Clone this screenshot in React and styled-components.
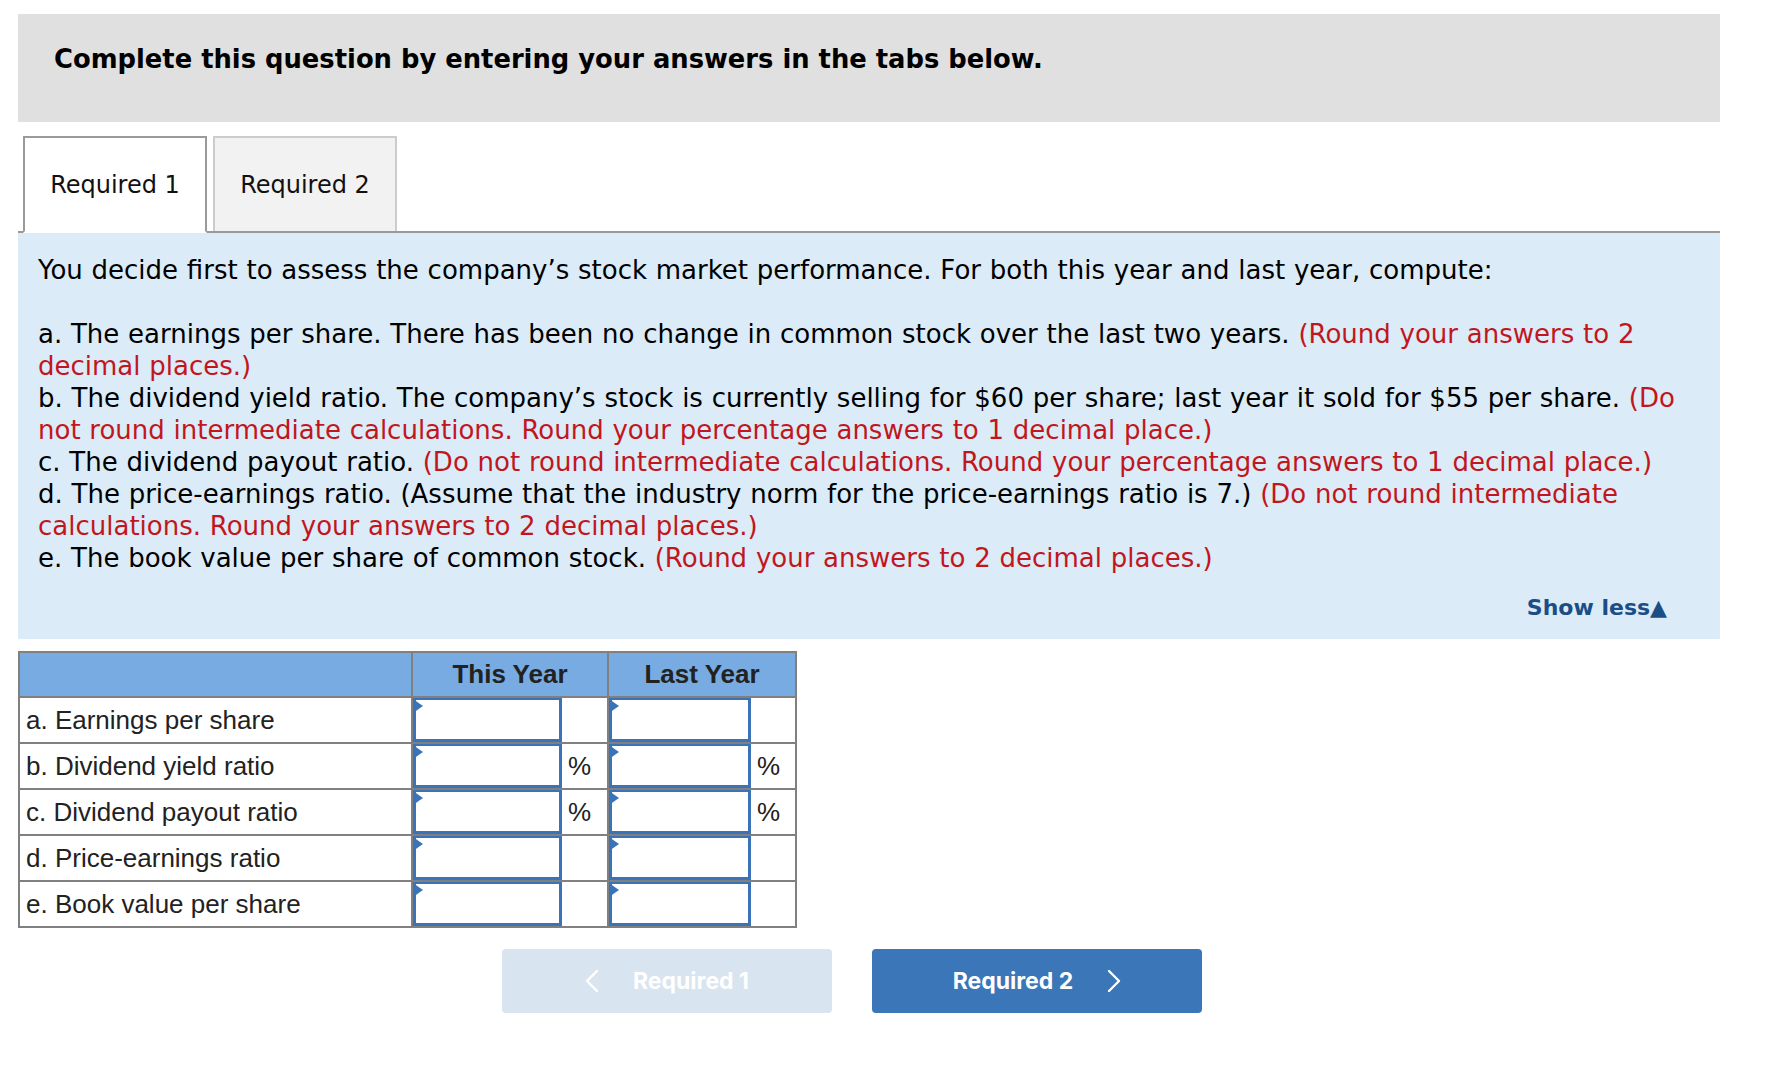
import React from 'react'
import styled, { createGlobalStyle } from 'styled-components'

const GlobalStyle = createGlobalStyle`
  body {
    margin: 0;
    background: #ffffff;
  }
`

const Page = styled.div`
  padding: 14px 46px 40px 18px;
  font-family: "DejaVu Sans", Verdana, sans-serif;
  color: #000;
`

const InstructionBar = styled.div`
  background-color: #e0e0e0;
  height: 108px;
  box-sizing: border-box;
  padding: 31px 27px 0 36px;
  font-size: 25.8px;
  line-height: 28px;
  font-weight: bold;
`

const TabList = styled.div`
  display: flex;
  gap: 6px;
  margin-top: 14px;
  padding-left: 5px;
  border-bottom: 2px solid #999;
`

const Tab = styled.div`
  width: 184px;
  box-sizing: border-box;
  display: flex;
  align-items: center;
  justify-content: center;
  font-size: 24px;
  color: #111;
  border: 2px solid ${props => (props.active ? '#9a9a9a' : '#cccccc')};
  background-color: ${props => (props.active ? '#ffffff' : '#f2f2f2')};
  margin-bottom: ${props => (props.active ? '-2px' : '0')};
  border-bottom: ${props => (props.active ? '2px solid #ffffff' : 'none')};
  height: ${props => (props.active ? '97px' : '95px')};
`

const Panel = styled.div`
  background-color: #dbebf7;
  padding: 21px 28px 15px 20px;
  font-size: 26px;
  line-height: 32px;
  word-spacing: 0.5px;
`

const Intro = styled.p`
  margin: 0 0 32px;
  white-space: nowrap;
`

const Item = styled.div`
  white-space: nowrap;
`

const Note = styled.span`
  color: #c2161d;
`

const ShowLess = styled.div`
  text-align: right;
  margin-top: 18px;
  margin-right: 25px;
  font-size: 22px;
  font-weight: bold;
  word-spacing: 0;
  color: #1b4d86;
`

const Table = styled.table`
  margin-top: 12px;
  border-collapse: collapse;
  table-layout: fixed;
  width: 777px;
  font-family: "Liberation Sans", Arial, sans-serif;
  color: #222;
`

const HeadCell = styled.th`
  background-color: #78abe1;
  border: 2px solid #808080;
  height: 43px;
  font-size: 26px;
  font-weight: bold;
  text-align: center;
  padding: 0;
`

const LabelCell = styled.td`
  border: 2px solid #808080;
  height: 44px;
  font-size: 26px;
  padding: 0 0 0 6px;
`

const InputCell = styled.td`
  border: 2px solid #808080;
  border-right: none;
  padding: 0;
  height: 44px;
`

const UnitCell = styled.td`
  border: 2px solid #808080;
  border-left: none;
  padding: 0 0 0 6px;
  font-size: 26px;
`

const InputBox = styled.div`
  position: relative;
  height: 44px;
  box-sizing: border-box;
  border: 3px solid #3b73b9;
  border-top-width: 2px;
  background: #fff;

  &::before {
    content: '';
    position: absolute;
    left: -3px;
    top: -1px;
    border-top: 7px solid transparent;
    border-bottom: 7px solid transparent;
    border-left: 10px solid #3b73b9;
  }
`

const NavRow = styled.div`
  display: flex;
  gap: 40px;
  margin-top: 21px;
  padding-left: 484px;
`

const NavButton = styled.button`
  width: 330px;
  height: 64px;
  border: none;
  border-radius: 4px;
  display: flex;
  align-items: center;
  justify-content: center;
  gap: 34px;
  font-family: Inter, Roboto, sans-serif;
  font-size: 23px;
  font-weight: 700;
  color: #fff;
  background-color: ${props => (props.disabled ? '#d9e4f1' : '#3a76b8')};
  padding: 0;
`

const Chevron = ({ dir }) => (
  <svg width='14' height='24' viewBox='0 0 14 24' fill='none'>
    <polyline
      points={dir === 'left' ? '12,2 2,12 12,22' : '2,2 12,12 2,22'}
      stroke='#ffffff'
      strokeWidth='2.4'
      strokeLinecap='round'
      strokeLinejoin='round'
    />
  </svg>
)

const rows = [
  { label: 'a. Earnings per share', unit: '' },
  { label: 'b. Dividend yield ratio', unit: '%' },
  { label: 'c. Dividend payout ratio', unit: '%' },
  { label: 'd. Price-earnings ratio', unit: '' },
  { label: 'e. Book value per share', unit: '' }
]

export default function App () {
  return (
    <Page>
      <GlobalStyle />
      <InstructionBar>Complete this question by entering your answers in the tabs below.</InstructionBar>

      <TabList>
        <Tab active>Required 1</Tab>
        <Tab>Required 2</Tab>
      </TabList>

      <Panel>
        <Intro>You decide first to assess the company’s stock market performance. For both this year and last year, compute:</Intro>
        <Item>
          a. The earnings per share. There has been no change in common stock over the last two years. <Note>(Round your answers to 2<br />decimal places.)</Note>
        </Item>
        <Item>
          b. The dividend yield ratio. The company’s stock is currently selling for $60 per share; last year it sold for $55 per share. <Note>(Do<br />not round intermediate calculations. Round your percentage answers to 1 decimal place.)</Note>
        </Item>
        <Item>
          c. The dividend payout ratio. <Note>(Do not round intermediate calculations. Round your percentage answers to 1 decimal place.)</Note>
        </Item>
        <Item>
          d. The price-earnings ratio. (Assume that the industry norm for the price-earnings ratio is 7.) <Note>(Do not round intermediate<br />calculations. Round your answers to 2 decimal places.)</Note>
        </Item>
        <Item>
          e. The book value per share of common stock. <Note>(Round your answers to 2 decimal places.)</Note>
        </Item>
        <ShowLess>Show less▲</ShowLess>
      </Panel>

      <Table>
        <colgroup>
          <col style={{ width: 393 }} />
          <col style={{ width: 150 }} />
          <col style={{ width: 46 }} />
          <col style={{ width: 143 }} />
          <col style={{ width: 45 }} />
        </colgroup>
        <thead>
          <tr>
            <HeadCell />
            <HeadCell colSpan={2}>This Year</HeadCell>
            <HeadCell colSpan={2}>Last Year</HeadCell>
          </tr>
        </thead>
        <tbody>
          {rows.map(row => (
            <tr key={row.label}>
              <LabelCell>{row.label}</LabelCell>
              <InputCell><InputBox /></InputCell>
              <UnitCell>{row.unit}</UnitCell>
              <InputCell><InputBox /></InputCell>
              <UnitCell>{row.unit}</UnitCell>
            </tr>
          ))}
        </tbody>
      </Table>

      <NavRow>
        <NavButton disabled>
          <Chevron dir='left' />
          Required 1
        </NavButton>
        <NavButton>
          Required 2
          <Chevron dir='right' />
        </NavButton>
      </NavRow>
    </Page>
  )
}
